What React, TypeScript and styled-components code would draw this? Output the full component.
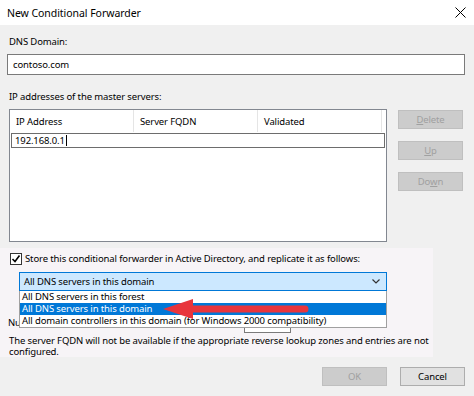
import React from 'react';
import styled, { createGlobalStyle, css } from 'styled-components';

const GlobalStyle = createGlobalStyle`
  html, body {
    margin: 0;
    padding: 0;
    background: #f0f0f0;
  }
  body {
    font-family: 'Noto Sans', 'Open Sans', sans-serif;
    font-size: 9.5px;
    letter-spacing: -0.12px;
    color: #000;
  }
`;

const Dialog = styled.div`
  width: 474px;
  height: 396px;
  background: #f0f0f0;
  display: flex;
  flex-direction: column;
  overflow: hidden;
`;

const TitleBar = styled.div`
  height: 25px;
  background: #fff;
  display: flex;
  align-items: center;
  justify-content: space-between;
  padding: 0 8px 0 7px;
  font-size: 10.5px;
  letter-spacing: -0.05px;
`;

const Body = styled.div`
  display: flex;
  flex-direction: column;
  padding: 0 9px 0 7px;
`;

const Label = styled.div<{ top: number }>`
  margin-top: ${(p) => p.top}px;
  padding-left: 2px;
  line-height: 14px;
  height: 14px;
`;

const TextBox = styled.div`
  margin-top: 5px;
  height: 21px;
  box-sizing: border-box;
  border: 1px solid #7a7a7a;
  background: #fff;
  display: flex;
  align-items: center;
  padding-left: 5px;
`;

const ListRow = styled.div`
  margin-top: 5px;
  display: flex;
  align-items: flex-start;
`;

const ListBox = styled.div`
  margin-left: 2px;
  width: 378px;
  height: 133px;
  box-sizing: border-box;
  border: 1px solid #828790;
  background: #fff;
  display: flex;
  flex-direction: column;
`;

const HeaderRow = styled.div`
  display: grid;
  grid-template-columns: 124px 124px 124px 1fr;
  height: 22px;
`;

const HeaderCell = styled.div`
  display: flex;
  align-items: center;
  padding-left: 6px;
  border-right: 1px solid #e5e5e5;
`;

const EditRow = styled.div`
  margin: 1px 1px 0 1px;
  height: 15px;
  box-sizing: border-box;
  border: 1px solid #6d6d6d;
  display: flex;
  align-items: center;
  padding-left: 3px;
`;

const Caret = styled.span`
  display: inline-block;
  width: 1px;
  height: 11px;
  background: #000;
  margin-left: 1px;
`;

const SideButtons = styled.div`
  margin-left: 11px;
  margin-top: 1px;
  display: flex;
  flex-direction: column;
  gap: 12px;
`;

const Button = styled.div<{ disabled?: boolean }>`
  width: 65px;
  height: 19px;
  box-sizing: border-box;
  display: flex;
  align-items: center;
  justify-content: center;
  ${(p) =>
    p.disabled
      ? css`
          background: #cccccc;
          border: 1px solid #bfbfbf;
          color: #a0a0a0;
        `
      : css`
          background: #e1e1e1;
          border: 1px solid #adadad;
          color: #000;
        `}
  u {
    text-decoration: underline;
  }
`;

const Panel = styled.div`
  margin: 6px 0 0 -7px;
  width: 433px;
  height: 109px;
  background: #f7f4f7;
  box-sizing: border-box;
  padding: 4px 0 0 10px;
  display: flex;
  flex-direction: column;
`;

const CheckRow = styled.label`
  display: flex;
  align-items: center;
  height: 14px;
  gap: 3px;
`;

const CheckBox = styled.span`
  width: 12px;
  height: 12px;
  box-sizing: border-box;
  border: 1px solid #333;
  background: #fff;
  display: flex;
  align-items: center;
  justify-content: center;
`;

const ComboWrap = styled.div`
  position: relative;
  margin: 7px 0 0 9px;
  width: 368px;
`;

const Combo = styled.div`
  height: 19px;
  box-sizing: border-box;
  border: 1px solid #0078d7;
  background: #cce8ff;
  display: flex;
  align-items: center;
  justify-content: space-between;
  padding: 0 6px 0 4px;
`;

const DropList = styled.div`
  position: absolute;
  top: 19px;
  left: 0;
  width: 368px;
  box-sizing: border-box;
  border: 1px solid #a0a0a0;
  border-top: none;
  background: #fff;
  z-index: 2;
`;

const DropItem = styled.div<{ selected?: boolean }>`
  height: 12px;
  line-height: 12px;
  padding-left: 2px;
  ${(p) =>
    p.selected &&
    css`
      background: #0078d7;
      color: #fff;
    `}
`;

const Arrow = styled.svg`
  position: absolute;
  left: 144px;
  top: 25px;
  z-index: 3;
`;

const TimeoutRow = styled.div`
  margin: 21px 0 0 -2px;
  height: 22px;
  display: flex;
  align-items: center;
  gap: 6px;
`;

const SmallInput = styled.div`
  width: 47px;
  height: 20px;
  box-sizing: border-box;
  border: 1px solid #7a7a7a;
  background: #fff;
`;

const InfoText = styled.div`
  margin: 2px 0 0 -1px;
  line-height: 11px;
  width: 425px;
`;

const Footer = styled.div`
  margin-top: 10px;
  display: flex;
  justify-content: flex-end;
  gap: 13px;
`;

const CloseIcon = () => (
  <svg width="11" height="11" viewBox="0 0 11 11">
    <path d="M0.5 0.5 L10.5 10.5 M10.5 0.5 L0.5 10.5" stroke="#000" strokeWidth="1" />
  </svg>
);

const Chevron = () => (
  <svg width="8" height="5" viewBox="0 0 8 5">
    <path d="M0.5 0.5 L4 4 L7.5 0.5" fill="none" stroke="#333" strokeWidth="1.2" />
  </svg>
);

const Check = () => (
  <svg width="10" height="10" viewBox="0 0 10 10">
    <path d="M1.5 5 L4 7.5 L8.5 1.5" fill="none" stroke="#000" strokeWidth="1.6" />
  </svg>
);

const options = [
  'All DNS servers in this forest',
  'All DNS servers in this domain',
  'All domain controllers in this domain (for Windows 2000 compatibility)',
];

export default function App() {
  return (
    <>
      <GlobalStyle />
      <Dialog>
        <TitleBar>
          <span>New Conditional Forwarder</span>
          <CloseIcon />
        </TitleBar>
        <Body>
          <Label top={10}>DNS Domain:</Label>
          <TextBox>contoso.com</TextBox>
          <Label top={15}>IP addresses of the master servers:</Label>
          <ListRow>
            <ListBox>
              <HeaderRow>
                <HeaderCell>IP Address</HeaderCell>
                <HeaderCell>Server FQDN</HeaderCell>
                <HeaderCell>Validated</HeaderCell>
                <div />
              </HeaderRow>
              <EditRow>
                192.168.0.1
                <Caret />
              </EditRow>
            </ListBox>
            <SideButtons>
              <Button disabled>
                <span>
                  <u>D</u>elete
                </span>
              </Button>
              <Button disabled>
                <span>
                  <u>U</u>p
                </span>
              </Button>
              <Button disabled>
                <span>
                  Do<u>w</u>n
                </span>
              </Button>
            </SideButtons>
          </ListRow>
          <Panel>
            <CheckRow>
              <CheckBox>
                <Check />
              </CheckBox>
              Store this conditional forwarder in Active Directory, and replicate it as follows:
            </CheckRow>
            <ComboWrap>
              <Combo>
                <span>All DNS servers in this domain</span>
                <Chevron />
              </Combo>
              <DropList>
                {options.map((o, i) => (
                  <DropItem key={o} selected={i === 1}>
                    {o}
                  </DropItem>
                ))}
              </DropList>
              <Arrow width="150" height="24" viewBox="0 0 150 24">
                <path d="M0 12 L30 2 L30 22 Z" fill="#e8353c" />
                <path d="M28 8.5 L142 8.5 A3.5 3.5 0 0 1 142 15.5 L28 15.5 Z" fill="#e8353c" />
              </Arrow>
            </ComboWrap>
            <TimeoutRow>
              <span>Number of seconds before forward queries time out:</span>
              <SmallInput />
            </TimeoutRow>
            <InfoText>
              The server FQDN will not be available if the appropriate reverse lookup zones and
              entries are not configured.
            </InfoText>
          </Panel>
          <Footer>
            <Button disabled>OK</Button>
            <Button>Cancel</Button>
          </Footer>
        </Body>
      </Dialog>
    </>
  );
}
